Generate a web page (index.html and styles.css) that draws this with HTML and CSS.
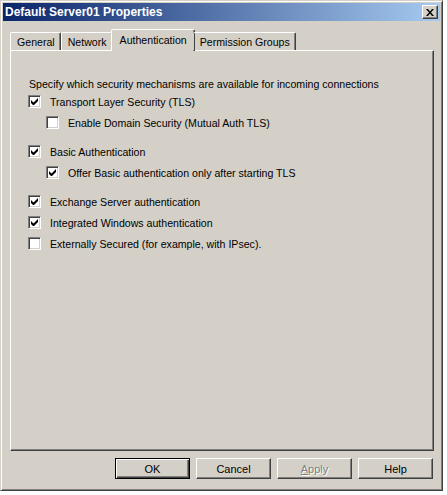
FILE: index.html
```html
<!DOCTYPE html>
<html lang="en">
<head>
  <meta charset="UTF-8" />
  <title>Default Server01 Properties</title>
  <link rel="stylesheet" href="styles.css">
</head>
<body>

  <div class="window">
    <div class="titlebar">
      <span class="title">Default Server01 Properties</span>
      <button class="close-btn" aria-label="Close">
        <svg width="8" height="7" viewBox="0 0 8 7"><path d="M0 0h2l2 2.5L6 0h2L5 3.5 8 7H6L4 4.5 2 7H0l3-3.5z" fill="#000"/></svg>
      </button>
    </div>

    <div class="tabs">
      <span class="tab">General</span>
      <span class="tab">Network</span>
      <span class="tab active">Authentication</span>
      <span class="tab">Permission Groups</span>
    </div>

    <div class="panel">
      <p class="intro">Specify which security mechanisms are available for incoming connections</p>

      <div class="group">
        <label class="row"><span class="check on"></span>Transport Layer Security (TLS)</label>
        <label class="row sub"><span class="check"></span>Enable Domain Security (Mutual Auth TLS)</label>
      </div>

      <div class="group">
        <label class="row"><span class="check on"></span>Basic Authentication</label>
        <label class="row sub"><span class="check on"></span>Offer Basic authentication only after starting TLS</label>
      </div>

      <div class="group">
        <label class="row"><span class="check on"></span>Exchange Server authentication</label>
        <label class="row"><span class="check on"></span>Integrated Windows authentication</label>
        <label class="row"><span class="check"></span>Externally Secured (for example, with IPsec).</label>
      </div>
    </div>

    <div class="buttons">
      <button class="btn default">OK</button>
      <button class="btn">Cancel</button>
      <button class="btn disabled"><u>A</u>pply</button>
      <button class="btn">Help</button>
    </div>
  </div>

</body>
</html>
```

FILE: styles.css
```css
* { margin: 0; padding: 0; box-sizing: border-box; }
body {
  font-family: 'Liberation Sans', Arial, sans-serif;
  font-size: 10.6px;
  background: #fff;
  color: #000;
}
.window {
  width: 443px;
  height: 491px;
  background: #d4d0c8;
  border: 1px solid;
  border-color: #d4d0c8 #404040 #404040 #d4d0c8;
  box-shadow: inset 1px 1px #fff, inset -1px -1px #808080;
  padding: 2px;
  display: flex;
  flex-direction: column;
}
.titlebar {
  height: 18px;
  background: linear-gradient(90deg, #0a246a, #a6caf0);
  display: flex;
  justify-content: space-between;
  align-items: center;
  padding: 0 2px 0 2px;
}
.title {
  color: #fff;
  font-weight: bold;
  font-size: 12px;
}
.close-btn {
  width: 16px;
  height: 14px;
  background: #d4d0c8;
  border: 1px solid;
  border-color: #fff #404040 #404040 #fff;
  box-shadow: inset -1px -1px #808080;
  display: flex;
  align-items: center;
  justify-content: center;
}
.tabs {
  margin: 8px 6px 0 7px;
  height: 21px;
  display: flex;
  align-items: flex-end;
  position: relative;
  z-index: 1;
}
.tab {
  height: 18px;
  padding: 3px 5px 0 6px;
  border: 1px solid;
  border-bottom: none;
  border-color: #fff #404040 transparent #fff;
  border-radius: 2px 2px 0 0;
  box-shadow: inset -1px 0 #808080;
  white-space: nowrap;
}
.tab.active {
  height: 22px;
  margin: 0 -2px -1px -2px;
  padding: 4px 7px 0 8px;
  background: #d4d0c8;
}
.tab.active + .tab { border-left-color: #d4d0c8; }
.panel {
  margin: 0 6px 0 7px;
  height: 401px;
  border: 1px solid;
  border-color: #fff #404040 #404040 #fff;
  box-shadow: inset -1px -1px #808080;
  padding: 26px 0 0 17px;
}
.intro {
  line-height: 14px;
  margin-left: 1px;
}
.group + .group { margin-top: 8px; }
.row {
  height: 21px;
  display: flex;
  align-items: center;
  gap: 9px;
}
.row.sub { padding-left: 18px; }
.check {
  width: 13px;
  height: 13px;
  background: #fff;
  border: 1px solid;
  border-color: #808080 #fff #fff #808080;
  box-shadow: inset 1px 1px #404040, inset -1px -1px #d4d0c8;
  flex-shrink: 0;
}
.check.on {
  background: #fff url("data:image/svg+xml,%3Csvg xmlns='http://www.w3.org/2000/svg' width='7' height='7'%3E%3Cpath d='M0 2v3l2 2h1l4-4V0L2.5 4.5z' fill='%23000'/%3E%3C/svg%3E") no-repeat 2px 2px;
}
.buttons {
  margin-top: 7px;
  padding-right: 7px;
  display: flex;
  justify-content: flex-end;
  gap: 6px;
}
.btn {
  width: 75px;
  height: 21px;
  font-family: inherit;
  font-size: 11px;
  background: #d4d0c8;
  border: 1px solid;
  border-color: #fff #404040 #404040 #fff;
  box-shadow: inset -1px -1px #808080;
  color: #000;
}
.btn.default {
  border: 1px solid #000;
  box-shadow: inset 1px 1px #fff, inset -1px -1px #404040, inset -2px -2px #808080;
}
.btn.disabled {
  color: #808080;
  text-shadow: 1px 1px #fff;
}
```
